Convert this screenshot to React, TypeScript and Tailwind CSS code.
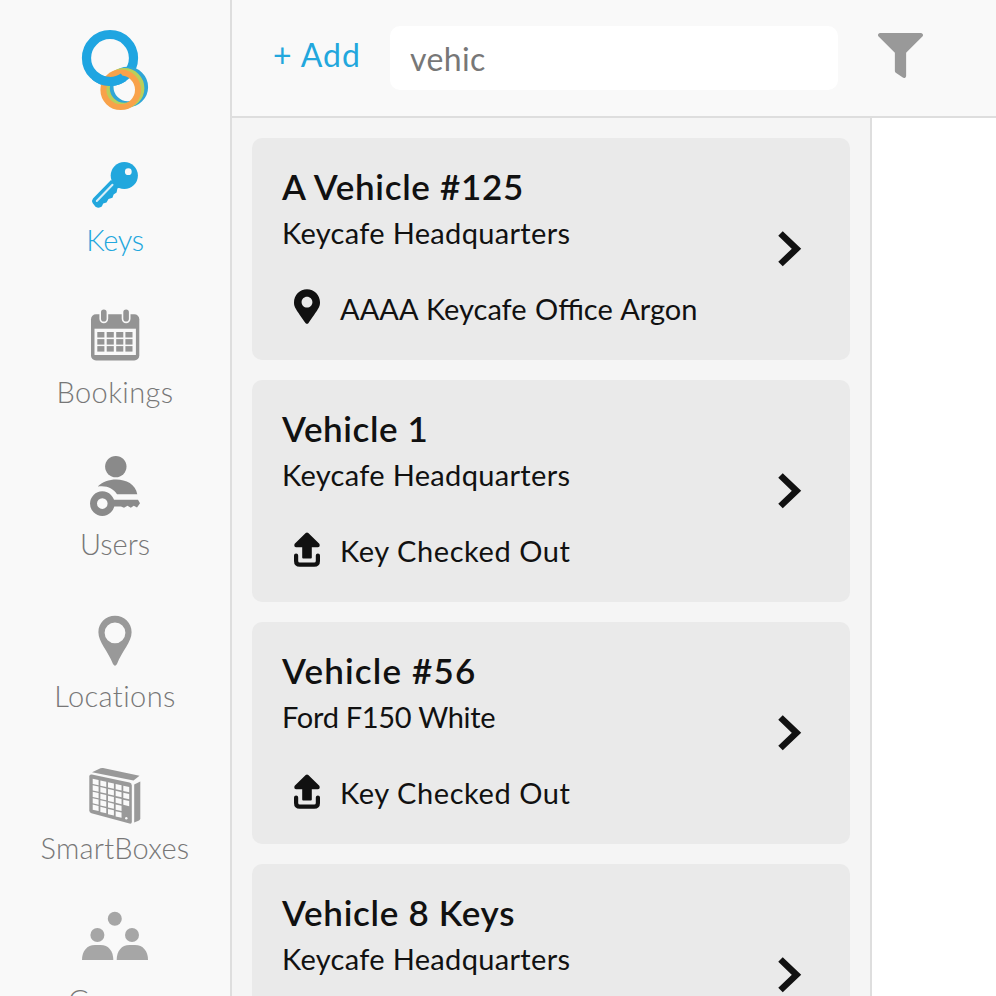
import React from 'react';
import { FaFilter, FaMapMarkerAlt } from 'react-icons/fa';

const keys = [
  { id: 1, name: 'A Vehicle #125', detail: 'Keycafe Headquarters', status: 'AAAA Keycafe Office Argon', type: 'location', titleClass: 'tracking-[0.7px]', detailClass: 'tracking-[0.33px]', statusClass: 'tracking-normal [word-spacing:1px]' },
  { id: 2, name: 'Vehicle 1', detail: 'Keycafe Headquarters', status: 'Key Checked Out', type: 'out', titleClass: 'tracking-[0.6px]', detailClass: 'tracking-[0.33px]', statusClass: 'tracking-[0.58px]' },
  { id: 3, name: 'Vehicle #56', detail: 'Ford F150 White', status: 'Key Checked Out', type: 'out', titleClass: 'tracking-[1.15px]', detailClass: 'tracking-[-0.3px]', statusClass: 'tracking-[0.58px]' },
  { id: 4, name: 'Vehicle 8 Keys', detail: 'Keycafe Headquarters', status: 'Key Checked Out', type: 'out', titleClass: 'tracking-[0.7px]', detailClass: 'tracking-[0.33px]', statusClass: 'tracking-[0.58px]' },
];

const Logo = () => (
  <svg className="h-[84px] w-[70px] shrink-0" viewBox="80 28 70 84" fill="none">
    <circle cx="110" cy="58" r="23.5" stroke="#1fa5e1" strokeWidth="9.2" />
    <circle cx="127.8" cy="87" r="17.3" stroke="#2fa6d6" strokeWidth="6" />
    <circle cx="124.2" cy="88.3" r="17.3" stroke="#b9cf5a" strokeWidth="5.8" />
    <circle cx="120.7" cy="89.8" r="17.3" stroke="#f8a24a" strokeWidth="6" />
    <path d="M123.5 77.3A23.5 23.5 0 0 1 95 76" stroke="#1fa5e1" strokeWidth="9.2" />
  </svg>
);

const KeyIcon = () => (
  <svg className="size-20 shrink-0" viewBox="0 0 80 80">
    <path
      d="M36 35L18 53.5Q16.4 55.5 17.6 58L20.5 61.8Q24 63.6 26.8 61.6L28.2 58.4L31.5 57.6L33.5 54L37.5 52.8L38.6 49.6L41.6 47.6L42.4 43.6L46 42Z"
      fill="#22a7dd"
    />
    <circle cx="49.3" cy="30.5" r="13.6" fill="#22a7dd" />
    <circle cx="53.3" cy="26.7" r="3.4" fill="#f9f9f9" />
    <path d="M37.5 39.7L21.8 56" stroke="#d8eef8" strokeWidth="2" strokeLinecap="round" />
  </svg>
);

const CalendarIcon = () => (
  <svg className="size-20 shrink-0" viewBox="0 0 80 80" fill="#949494">
    <rect x="16" y="17.3" width="48.3" height="46.2" rx="5" />
    <rect x="19.5" y="31.7" width="41.4" height="26.3" fill="#f9f9f9" />
    {[35, 42.1, 49.1].map((y) =>
      [22.3, 31.7, 41.2, 50.4].map((x) => <rect key={`${x}-${y}`} x={x} y={y} width="7.1" height="5.5" />)
    )}
    <rect x="25.2" y="11.6" width="7.2" height="13.8" rx="3.6" stroke="#f9f9f9" strokeWidth="1.6" />
    <rect x="47.5" y="11.6" width="7.2" height="13.8" rx="3.6" stroke="#f9f9f9" strokeWidth="1.6" />
  </svg>
);

const UsersIcon = () => (
  <svg className="size-20 shrink-0" viewBox="0 0 80 80" fill="#8a8a8a">
    <circle cx="40.8" cy="17.6" r="10.7" />
    <path d="M22.7 37.6C33 26.5 59.5 28 62.3 45.2H42C38.5 40 32 36 22.7 37.6Z" />
    <circle cx="27.3" cy="54.6" r="8.8" fill="none" stroke="#8a8a8a" strokeWidth="7" />
    <path d="M37 50.8H63L65 54.3L62 58.4L58.8 56.8L55.8 58.8L52.5 56.8L49 58.8L46 57.4H37Z" />
  </svg>
);

const LocationIcon = () => (
  <svg className="size-20 shrink-0" viewBox="0 0 80 80" fill="#999999">
    <path
      fillRule="evenodd"
      d="M40 14.8C30.6 14.8 23.4 22 23.4 31.2C23.4 41 33 50 38 63Q40 66.6 42 63C47 50 56.6 41 56.6 31.2C56.6 22 49.4 14.8 40 14.8ZM40 21.4A10.4 10.4 0 1 1 40 42.2A10.4 10.4 0 1 1 40 21.4Z"
    />
  </svg>
);

const SmartBoxIcon = () => (
  <svg className="size-20 shrink-0" viewBox="0 0 80 80" fill="#999999">
    <path d="M17 19.2L25.5 15.2Q26.5 14.8 28 15L64.5 22.8L58.5 27.6Z" />
    <path d="M59.2 31.4L65.3 28.4V65.5Q65.3 66.8 64 67.4L59.2 69.6Z" />
    <path d="M16.8 21.6L54.5 29.6Q56.8 30.2 56.8 32.5V69Q56.8 71.2 54.5 70.6L16.5 60.2Q14.3 59.5 14.3 57.2V23.5Q14.3 21.2 16.8 21.6Z" />
    <g fill="#f9f9f9">
      {[0, 1, 2, 3, 4].map((col) =>
        [0, 1, 2, 3, 4]
          .filter((row) => col < 4 || row < 3)
          .map((row) => {
            const x = 17.7 + col * 7.65;
            const y = 25.8 + col * 1.75 + row * (6.45 + col * 0.12);
            return <path key={`${col}-${row}`} d={`M${x} ${y}l5.9 1.3v5.2l-5.9 -1.3z`} />;
          })
      )}
      <circle cx="51.3" cy="65.3" r="1.2" />
    </g>
  </svg>
);

const GroupsIcon = () => (
  <svg className="size-20 shrink-0" viewBox="0 0 80 80" fill="#a6a6a6">
    <circle cx="39.8" cy="13.7" r="7" />
    <circle cx="22.4" cy="30" r="7" />
    <circle cx="57" cy="30" r="7" />
    <path d="M7 55C7 46 12 40 20 40H25.5C33.5 40 38.3 46 38.3 55Z" />
    <path d="M41.7 55C41.7 46 46.5 40 54.5 40H60C68 40 73 46 73 55Z" />
  </svg>
);

const CheckedOutIcon = () => (
  <svg className="h-9 w-[26px]" viewBox="0 0 26 36" fill="#111111">
    <path d="M11.7 .9Q13 -.1 14.3 .9L25.3 11.8Q26.5 14.6 24 15.2H17.8V25.5Q17.8 26.4 16.9 26.4H9.1Q8.2 26.4 8.2 25.5V15.2H2Q-.5 14.6 .7 11.8Z" />
    <path d="M2.1 23.5V29Q2.1 32.7 5.8 32.7H20.2Q23.9 32.7 23.9 29V23.5" fill="none" stroke="#111111" strokeWidth="4.2" strokeLinecap="round" />
  </svg>
);

const navItems = [
  { label: 'Keys', icon: KeyIcon, className: 'text-[#22a7dd] tracking-[-0.3px]' },
  { label: 'Bookings', icon: CalendarIcon, className: 'text-[#777777] tracking-[0.4px]' },
  { label: 'Users', icon: UsersIcon, className: 'text-[#777777] tracking-normal' },
  { label: 'Locations', icon: LocationIcon, className: 'text-[#777777] tracking-[0.4px]' },
  { label: 'SmartBoxes', icon: SmartBoxIcon, className: 'text-[#777777] tracking-[0.2px]' },
  { label: 'Groups', icon: GroupsIcon, className: 'text-[#777777] tracking-[0.4px]' },
];

export default function App() {
  return (
    <div className="flex h-screen overflow-hidden bg-white font-[Lato,'Open_Sans',sans-serif] text-[#111111]">
      {/* Sidebar */}
      <nav className="flex w-[232px] shrink-0 flex-col items-center border-r-2 border-[#dedede] bg-[#f9f9f9] pt-7">
        <Logo />
        <div className="mt-[33px] flex flex-col items-center">
          {navItems.map(({ label, icon: Icon, className }) => (
            <a key={label} className={`flex h-[152px] shrink-0 flex-col items-center ${className}`}>
              <Icon />
              <span className="text-[29px] leading-[29px] font-light">{label}</span>
            </a>
          ))}
        </div>
      </nav>

      <div className="flex min-w-0 flex-1 flex-col">
        {/* Toolbar */}
        <header className="flex h-[118px] shrink-0 items-start border-b-2 border-[#dedede] bg-[#f9f9f9] pl-[41px]">
          <button className="mt-[35px] w-[117px] text-left text-[32px] leading-10 tracking-[1px] whitespace-nowrap text-[#22a7dd]">+ Add</button>
          <input
            className="mt-[26px] h-16 w-[448px] rounded-[10px] bg-white px-5 text-[32px] tracking-[0.4px] text-[#777777] outline-none"
            defaultValue="vehic"
          />
          <FaFilter className="mt-[33px] ml-10 size-[45px] text-[#999999]" />
        </header>

        {/* Key list */}
        <main className="flex min-h-0 w-[640px] flex-1 flex-col gap-5 overflow-hidden border-r-2 border-[#dedede] bg-[#f5f5f5] p-5">
          {keys.map((item) => (
            <div key={item.id} className="flex h-[222px] shrink-0 items-center justify-between rounded-[10px] bg-[#eaeaea] pr-12 pl-[30px]">
              <div className="h-full pt-[26px]">
                <h2 className={`text-[35px] leading-[44px] font-semibold ${item.titleClass}`}>{item.name}</h2>
                <p className={`mt-[5px] text-[29px] leading-10 ${item.detailClass}`}>{item.detail}</p>
                <div className="mt-[33px] flex h-14 items-start pl-3">
                  {item.type === 'location' ? <FaMapMarkerAlt className="mt-[3px] h-[35px] w-[26px]" /> : <span className="mt-1"><CheckedOutIcon /></span>}
                  <span className={`ml-5 pt-[3px] text-[29px] leading-[40px] ${item.statusClass}`}>{item.status}</span>
                </div>
              </div>
              <svg className="h-9 w-6" viewBox="0 0 24 36" fill="none" stroke="#111111" strokeWidth="6.5">
                <path d="M2.5 2.5L18.5 17.8L2.5 33" />
              </svg>
            </div>
          ))}
        </main>
      </div>
    </div>
  );
}
